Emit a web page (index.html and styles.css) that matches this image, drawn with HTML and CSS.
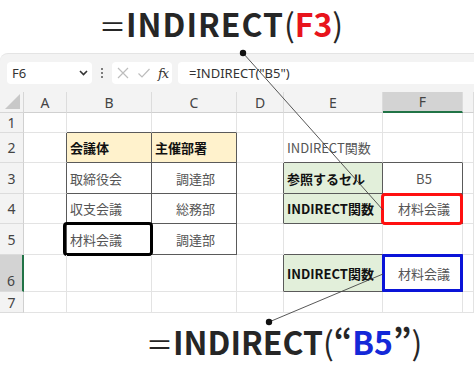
FILE: index.html
```html
<!DOCTYPE html>
<html lang="ja">
<head>
    <meta charset="UTF-8">
    <title>INDIRECT関数</title>
    <link rel="stylesheet" href="styles.css">
</head>
<body>
    <div class="page">
        <div class="title title-top">
            <span class="eq">＝</span><span class="word">INDIRECT</span><span class="thin">(</span><span class="red">F3</span><span class="thin">)</span>
        </div>

        <div class="excel">
            <div class="formula-bar">
                <div class="name-box">
                    <span>F6</span>
                    <svg class="chevron" width="9" height="6" viewBox="0 0 9 6"><path d="M1 1 L4.5 4.5 L8 1" fill="none" stroke="#333" stroke-width="1.6"/></svg>
                </div>
                <div class="dots"><i></i><i></i><i></i></div>
                <div class="fx-box">
                    <svg width="14" height="14" viewBox="0 0 14 14"><path d="M2 2 L12 12 M12 2 L2 12" stroke="#bdbdbd" stroke-width="1.2"/></svg>
                    <svg width="14" height="14" viewBox="0 0 14 14"><path d="M1.5 7.5 L5 11 L12.5 3" fill="none" stroke="#bdbdbd" stroke-width="1.2"/></svg>
                    <span class="fx">fx</span>
                </div>
                <div class="formula-input">=INDIRECT("B5")</div>
            </div>

            <div class="grid">
                <div class="corner"><span class="tri"></span></div>
                <div class="col-hd">A</div>
                <div class="col-hd">B</div>
                <div class="col-hd">C</div>
                <div class="col-hd">D</div>
                <div class="col-hd">E</div>
                <div class="col-hd sel">F</div>
                <div class="col-hd"></div>

                <div class="row-hd">1</div>
                <div class="cell"></div>
                <div class="cell tb"></div>
                <div class="cell tb"></div>
                <div class="cell"></div>
                <div class="cell"></div>
                <div class="cell"></div>
                <div class="cell"></div>

                <div class="row-hd">2</div>
                <div class="cell tr"></div>
                <div class="cell t head">会議体</div>
                <div class="cell t head">主催部署</div>
                <div class="cell"></div>
                <div class="cell tb">INDIRECT関数</div>
                <div class="cell tb"></div>
                <div class="cell"></div>

                <div class="row-hd">3</div>
                <div class="cell tr"></div>
                <div class="cell t">取締役会</div>
                <div class="cell t center">調達部</div>
                <div class="cell tr"></div>
                <div class="cell t green">参照するセル</div>
                <div class="cell t center">B5</div>
                <div class="cell"></div>

                <div class="row-hd">4</div>
                <div class="cell tr"></div>
                <div class="cell t">収支会議</div>
                <div class="cell t center">総務部</div>
                <div class="cell tr"></div>
                <div class="cell t green">INDIRECT関数</div>
                <div class="cell t center">材料会議<span class="mark mark-red"></span></div>
                <div class="cell"></div>

                <div class="row-hd">5</div>
                <div class="cell tr"></div>
                <div class="cell t">材料会議<span class="mark mark-black"></span></div>
                <div class="cell t center">調達部</div>
                <div class="cell"></div>
                <div class="cell tb"></div>
                <div class="cell tb"></div>
                <div class="cell"></div>

                <div class="row-hd sel">6</div>
                <div class="cell"></div>
                <div class="cell"></div>
                <div class="cell"></div>
                <div class="cell tr"></div>
                <div class="cell t green">INDIRECT関数</div>
                <div class="cell t center">材料会議<span class="mark mark-blue"></span></div>
                <div class="cell"></div>

                <div class="row-hd">7</div>
                <div class="cell"></div>
                <div class="cell"></div>
                <div class="cell"></div>
                <div class="cell"></div>
                <div class="cell"></div>
                <div class="cell"></div>
                <div class="cell"></div>
            </div>
        </div>

        <div class="title title-bottom">
            <span class="eq">＝</span><span class="word">INDIRECT</span><span class="thin">(</span>“<span class="blue">B5</span>”<span class="thin">)</span>
        </div>

        <!-- leader lines from the formulas to the result cells -->
        <svg class="leaders" width="474" height="384" viewBox="0 0 474 384">
            <line x1="243" y1="53" x2="383" y2="210" stroke="#444" stroke-width="0.9"/>
            <circle cx="243" cy="53" r="3.2" fill="#111"/>
            <line x1="269" y1="322" x2="383" y2="274" stroke="#444" stroke-width="0.9"/>
            <circle cx="269" cy="322" r="3.2" fill="#111"/>
        </svg>
    </div>
</body>
</html>
```

FILE: styles.css
```css
body {
    margin: 0;
    background: white;
    font-family: "Noto Sans CJK JP", "Noto Sans", sans-serif;
}

.page {
    position: relative;
    width: 474px;
    height: 384px;
    overflow: hidden;
}

.title {
    font-size: 32px;
    font-weight: 700;
    color: #262626;
    line-height: 46px;
    white-space: nowrap;
}

.title-top {
    height: 53px;
    padding-left: 99px;
    box-sizing: border-box;
}

.title-top .word {
    letter-spacing: 1px;
}

.title-bottom {
    padding-top: 5px;
    padding-left: 146px;
}

.title .eq {
    font-weight: 400;
    font-size: 27px;
}

.title .thin {
    font-weight: 400;
}

.red {
    color: #e8141c;
}

.blue {
    color: #1428d8;
}

.excel {
    background: #f3f3f3;
    border-top-left-radius: 8px;
    border-top: 1px solid #e4e4e4;
}

.formula-bar {
    display: flex;
    align-items: center;
    height: 38px;
    padding-left: 7px;
}

.name-box {
    width: 85px;
    height: 22px;
    background: white;
    border-radius: 4px;
    display: flex;
    align-items: center;
    justify-content: space-between;
    padding: 0 4px 0 5px;
    box-sizing: border-box;
    font-size: 13px;
    color: #333;
    font-family: "Noto Sans", sans-serif;
}

.dots {
    width: 20px;
    display: flex;
    flex-direction: column;
    align-items: center;
    gap: 2px;
}

.dots i {
    width: 2px;
    height: 2px;
    background: #555;
    border-radius: 1px;
}

.fx-box {
    width: 60px;
    height: 22px;
    background: white;
    border-radius: 4px;
    display: flex;
    align-items: center;
    gap: 7px;
    padding-left: 4px;
    box-sizing: border-box;
}

.fx {
    font-family: "DejaVu Serif", serif;
    font-style: italic;
    font-size: 13px;
    color: #333;
    letter-spacing: -1px;
}

.formula-input {
    flex: 1;
    height: 22px;
    margin-left: 6px;
    background: white;
    border-radius: 4px 0 0 4px;
    padding-left: 11px;
    font-family: "Noto Sans", sans-serif;
    font-size: 13px;
    line-height: 22px;
    color: #333;
}

.grid {
    display: grid;
    grid-template-columns: 24px 43px 85px 85px 47px 99px 80px 11px;
    grid-template-rows: 21px 20px 30px 31px 30px 31px 37px 21px;
    background: white;
}

.grid > div {
    box-sizing: border-box;
    display: flex;
    align-items: center;
    font-size: 13px;
    color: #555;
}

.corner {
    background: #f3f3f3;
    border-right: 1px solid #d6d6d6;
    border-bottom: 1px solid #d6d6d6;
    position: relative;
}

.tri {
    position: absolute;
    right: 3px;
    bottom: 3px;
    width: 0;
    height: 0;
    border-left: 15px solid transparent;
    border-bottom: 15px solid #c8c8c8;
}

.grid > .col-hd {
    background: #f3f3f3;
    justify-content: center;
    border-right: 1px solid #dcdcdc;
    border-bottom: 1px solid #d0d0d0;
    font-family: "Noto Sans", sans-serif;
    font-size: 14px;
    color: #444;
}

.grid > .row-hd {
    background: #f3f3f3;
    justify-content: center;
    border-right: 1px solid #d0d0d0;
    border-bottom: 1px solid #dcdcdc;
    font-family: "Noto Sans", sans-serif;
    font-size: 14px;
    color: #444;
}

.grid > .col-hd.sel {
    background: #d3d3d3;
    border-bottom: 2px solid #217346;
}

.grid > .row-hd.sel {
    background: #d3d3d3;
    border-right: 2px solid #217346;
    align-items: flex-end;
    padding-bottom: 1px;
}

.cell {
    border-right: 1px solid #e3e3e3;
    border-bottom: 1px solid #e3e3e3;
    padding-left: 3px;
    position: relative;
}

.cell.t {
    border-right-color: #5a5a5a;
    border-bottom-color: #5a5a5a;
}

.cell.tb {
    border-bottom-color: #5a5a5a;
}

.cell.tr {
    border-right-color: #5a5a5a;
}

.grid > .head {
    background: #fff2cc;
    font-weight: 700;
    color: #111;
}

.grid > .green {
    background: #e2efda;
    font-weight: 700;
    color: #111;
}

.center {
    justify-content: center;
}

.mark {
    position: absolute;
    border-radius: 4px;
    border: 3px solid;
}

.mark-black {
    left: -4px;
    top: -2px;
    right: -2px;
    bottom: -2px;
    border-color: #000;
}

.mark-red {
    left: -2px;
    top: -1px;
    right: -1px;
    bottom: -2px;
    border-color: #ff1010;
}

.mark-blue {
    left: -1px;
    top: -1px;
    right: -1px;
    bottom: -1px;
    border-radius: 1px;
    border-color: #0a14d8;
}

.leaders {
    position: absolute;
    left: 0;
    top: 0;
    pointer-events: none;
}
```
